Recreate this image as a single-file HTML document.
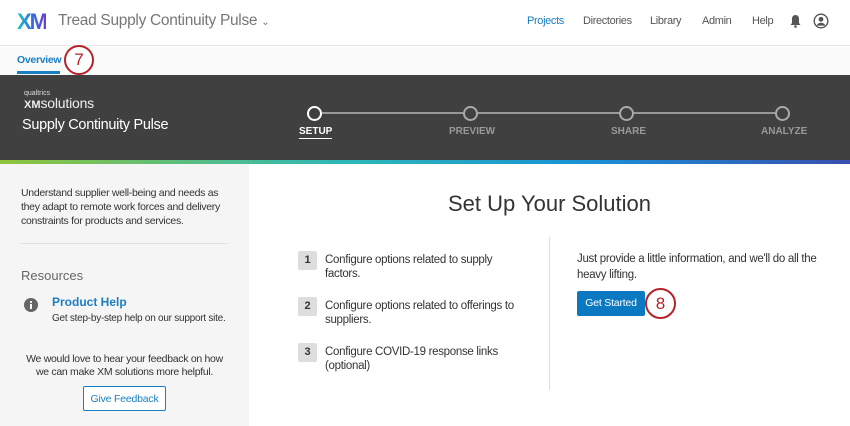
<!DOCTYPE html>
<html><head><style>
*{margin:0;padding:0;box-sizing:border-box}
body{width:850px;height:426px;overflow:hidden;font-family:"Liberation Sans",sans-serif;background:#fff;position:relative;color:#333}
.a{position:absolute;white-space:nowrap}
.t{letter-spacing:-0.35px}
</style></head><body>
<div class="a" style="left:0;top:0;width:850px;height:46px;background:#fff;border-bottom:1px solid #e8e8e8"></div>
<div class="a" style="left:17px;top:9px;font-size:22px;font-weight:bold;letter-spacing:-2px;background:linear-gradient(90deg,#21c7c7,#2f6fe0,#6a3fd0);-webkit-background-clip:text;color:transparent">XM</div>
<div class="a" style="left:58px;top:12px;font-size:15.5px;letter-spacing:-0.3px;color:#777">Tread Supply Continuity Pulse <span style="font-size:10px">⌄</span></div>
<div class="a t" style="left:527px;top:15px;font-size:11px;color:#1a7ec2">Projects</div>
<div class="a t" style="left:583px;top:15px;font-size:11px;color:#555">Directories</div>
<div class="a t" style="left:650px;top:15px;font-size:11px;color:#555">Library</div>
<div class="a t" style="left:702px;top:15px;font-size:11px;color:#555">Admin</div>
<div class="a t" style="left:752px;top:15px;font-size:11px;color:#555">Help</div>
<svg class="a" style="left:789px;top:14px" width="13" height="14" viewBox="0 0 13 14"><path d="M6.5 1C4 1 3 3 3 5v4L1.5 11h10L10 9V5c0-2-1-4-3.5-4z" fill="#555"/><circle cx="6.5" cy="12.5" r="1.3" fill="#555"/></svg>
<svg class="a" style="left:813px;top:13px" width="16" height="16" viewBox="0 0 16 16"><circle cx="8" cy="8" r="6.8" fill="none" stroke="#555" stroke-width="1.4"/><circle cx="8" cy="6.3" r="2.4" fill="#555"/><path d="M3.6 12.6c1-2 2.6-2.8 4.4-2.8s3.4.8 4.4 2.8" fill="#555"/></svg>
<div class="a" style="left:0;top:47px;width:850px;height:28px;background:#fafafa"></div>
<div class="a" style="left:17px;top:54px;font-size:10.5px;letter-spacing:-0.3px;font-weight:bold;color:#1a7ec2">Overview</div>
<div class="a" style="left:17px;top:71px;width:43px;height:3px;background:#1a7ec2"></div>
<div class="a" style="left:64px;top:45px;width:30px;height:30px;border:2px solid #b5232a;border-radius:50%;background:#fff;text-align:center;line-height:26px;font-size:17px;color:#b5232a">7</div>
<div class="a" style="left:0;top:75px;width:850px;height:85px;background:#404040"></div>
<div class="a" style="left:0;top:160px;width:850px;height:4px;background:linear-gradient(90deg,#8fc43a,#2fb8b8 40%,#1a8fd6 70%,#3a4fb0)"></div>
<div class="a" style="left:24px;top:90px;font-size:7px;color:#ddd">qualtrics</div>
<div class="a" style="left:24px;top:95px;font-size:14px;color:#eee"><b style="font-size:11px">XM</b><span style="font-weight:300;letter-spacing:-.2px">solutions</span></div>
<div class="a" style="left:22px;top:117px;font-size:14.5px;letter-spacing:-0.3px;color:#fff">Supply Continuity Pulse</div>
<div class="a" style="left:322px;top:112px;width:454px;height:2px;background:#999"></div>
<div class="a" style="left:307px;top:106px;width:15px;height:15px;border:2px solid #fff;border-radius:50%;background:#404040"></div>
<div class="a" style="left:463px;top:106px;width:15px;height:15px;border:2px solid #aaa;border-radius:50%;background:#404040"></div>
<div class="a" style="left:619px;top:106px;width:15px;height:15px;border:2px solid #aaa;border-radius:50%;background:#404040"></div>
<div class="a" style="left:775px;top:106px;width:15px;height:15px;border:2px solid #aaa;border-radius:50%;background:#404040"></div>
<div class="a" style="left:299px;top:126px;font-size:10px;font-weight:bold;color:#fff;border-bottom:1px solid #fff;padding-bottom:1px">SETUP</div>
<div class="a" style="left:449px;top:126px;font-size:10px;font-weight:bold;color:#999">PREVIEW</div>
<div class="a" style="left:611px;top:126px;font-size:10px;font-weight:bold;color:#999">SHARE</div>
<div class="a" style="left:761px;top:126px;font-size:10px;font-weight:bold;color:#999">ANALYZE</div>
<div class="a" style="left:0;top:164px;width:249px;height:262px;background:#f5f5f5"></div>
<div class="a" style="left:21px;top:186px;font-size:10.5px;letter-spacing:-0.3px;line-height:14px;color:#333">Understand supplier well-being and needs as<br>they adapt to remote work forces and delivery<br>constraints for products and services.</div>
<div class="a" style="left:21px;top:243px;width:207px;height:1px;background:#e2e2e2"></div>
<div class="a" style="left:21px;top:268px;font-size:13px;color:#666">Resources</div>
<svg class="a" style="left:24px;top:298px" width="14" height="14" viewBox="0 0 14 14"><circle cx="7" cy="7" r="7" fill="#666"/><rect x="6" y="6" width="2" height="5" fill="#fff"/><circle cx="7" cy="4" r="1.1" fill="#fff"/></svg>
<div class="a" style="left:52px;top:295px;font-size:12px;font-weight:bold;color:#1a7ec2">Product Help</div>
<div class="a" style="left:52px;top:313px;font-size:10px;letter-spacing:-0.25px;color:#333">Get step-by-step help on our support site.</div>
<div class="a" style="left:0;top:353px;width:249px;text-align:center;font-size:10.5px;letter-spacing:-0.3px;line-height:13px;color:#333">We would love to hear your feedback on how<br>we can make XM solutions more helpful.</div>
<div class="a" style="left:83px;top:386px;width:83px;height:25px;border:1px solid #1a7ec2;border-radius:2px;background:#fff;text-align:center;padding-top:6px;font-size:10.5px;letter-spacing:-0.2px;color:#1a7ec2">Give Feedback</div>
<div class="a" style="left:249px;top:191px;width:601px;text-align:center;font-size:22px;color:#333">Set Up Your Solution</div>
<div class="a" style="left:549px;top:237px;width:1px;height:153px;background:#ddd"></div>
<div class="a" style="left:298px;top:251px;width:19px;height:19px;background:#ddd;border-radius:2px;text-align:center;line-height:19px;font-size:11px;font-weight:bold">1</div>
<div class="a" style="left:325px;top:253px;font-size:11.5px;letter-spacing:-0.3px;line-height:14px">Configure options related to supply<br>factors.</div>
<div class="a" style="left:298px;top:297px;width:19px;height:19px;background:#ddd;border-radius:2px;text-align:center;line-height:19px;font-size:11px;font-weight:bold">2</div>
<div class="a" style="left:325px;top:299px;font-size:11.5px;letter-spacing:-0.3px;line-height:14px">Configure options related to offerings to<br>suppliers.</div>
<div class="a" style="left:298px;top:343px;width:19px;height:19px;background:#ddd;border-radius:2px;text-align:center;line-height:19px;font-size:11px;font-weight:bold">3</div>
<div class="a" style="left:325px;top:345px;font-size:11.5px;letter-spacing:-0.3px;line-height:14px">Configure COVID-19 response links<br>(optional)</div>
<div class="a" style="left:577px;top:251px;font-size:11.5px;letter-spacing:-0.3px;line-height:16px">Just provide a little information, and we'll do all the<br>heavy lifting.</div>
<div class="a" style="left:577px;top:291px;width:68px;height:25px;background:#0b78c2;border-radius:2px;text-align:center;padding-top:6px;font-size:10.5px;letter-spacing:-0.2px;color:#fff">Get Started</div>
<div class="a" style="left:645px;top:288px;width:31px;height:31px;border:2px solid #b5232a;border-radius:50%;background:#fff;text-align:center;line-height:27px;font-size:17px;color:#b5232a">8</div>
</body></html>
